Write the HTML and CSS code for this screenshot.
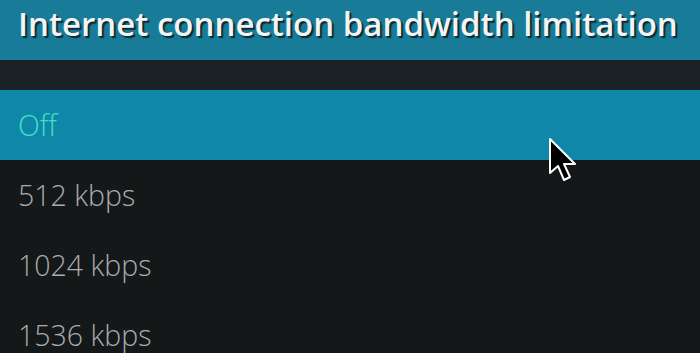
FILE: index.html
```
<!DOCTYPE html>
<html>
<head>
    <link rel="stylesheet" href="styles.css">
</head>
<body>
<div id="dialog">
    <div class="title">Internet connection bandwidth limitation</div>
    <div class="band"></div>
    <div class="list">
        <div class="item selected">Off</div>
        <div class="item">512 kbps</div>
        <div class="item">1024 kbps</div>
        <div class="item">1536 kbps</div>
    </div>
    <svg class="cursor" width="34" height="50" viewBox="0 0 34 50">
        <path d="M2 2 L2 36 L10 29 L16 43 L22 40 L16 27 L27 27 Z" fill="#000" stroke="#fff" stroke-width="2" stroke-linejoin="round"/>
    </svg>
</div>
</body>
</html>
```
FILE: styles.css
```
* {
    box-sizing: border-box;
}

body {
    margin: 0;
    background-color: #151819;
    font-family: "Open Sans", "Noto Sans", sans-serif;
    overflow: hidden;
}

#dialog {
    position: relative;
    width: 700px;
    height: 353px;
}

.title {
    height: 60px;
    background-color: #187c98;
    color: #f2f4f5;
    font-size: 33px;
    font-weight: 600;
    padding: 0 0 0 18px;
    line-height: 48px;
    text-shadow: 2px 2px 1px #0b2a33;
    white-space: nowrap;
}

.band {
    height: 30px;
    background-color: #1b2125;
}

.item {
    height: 70px;
    padding-left: 18px;
    line-height: 70px;
    font-size: 28.5px;
    font-weight: 300;
    color: #a9abac;
}

.item.selected {
    background-color: #0f87a8;
    color: #41e0c0;
}

.cursor {
    position: absolute;
    left: 548px;
    top: 137px;
}
```
